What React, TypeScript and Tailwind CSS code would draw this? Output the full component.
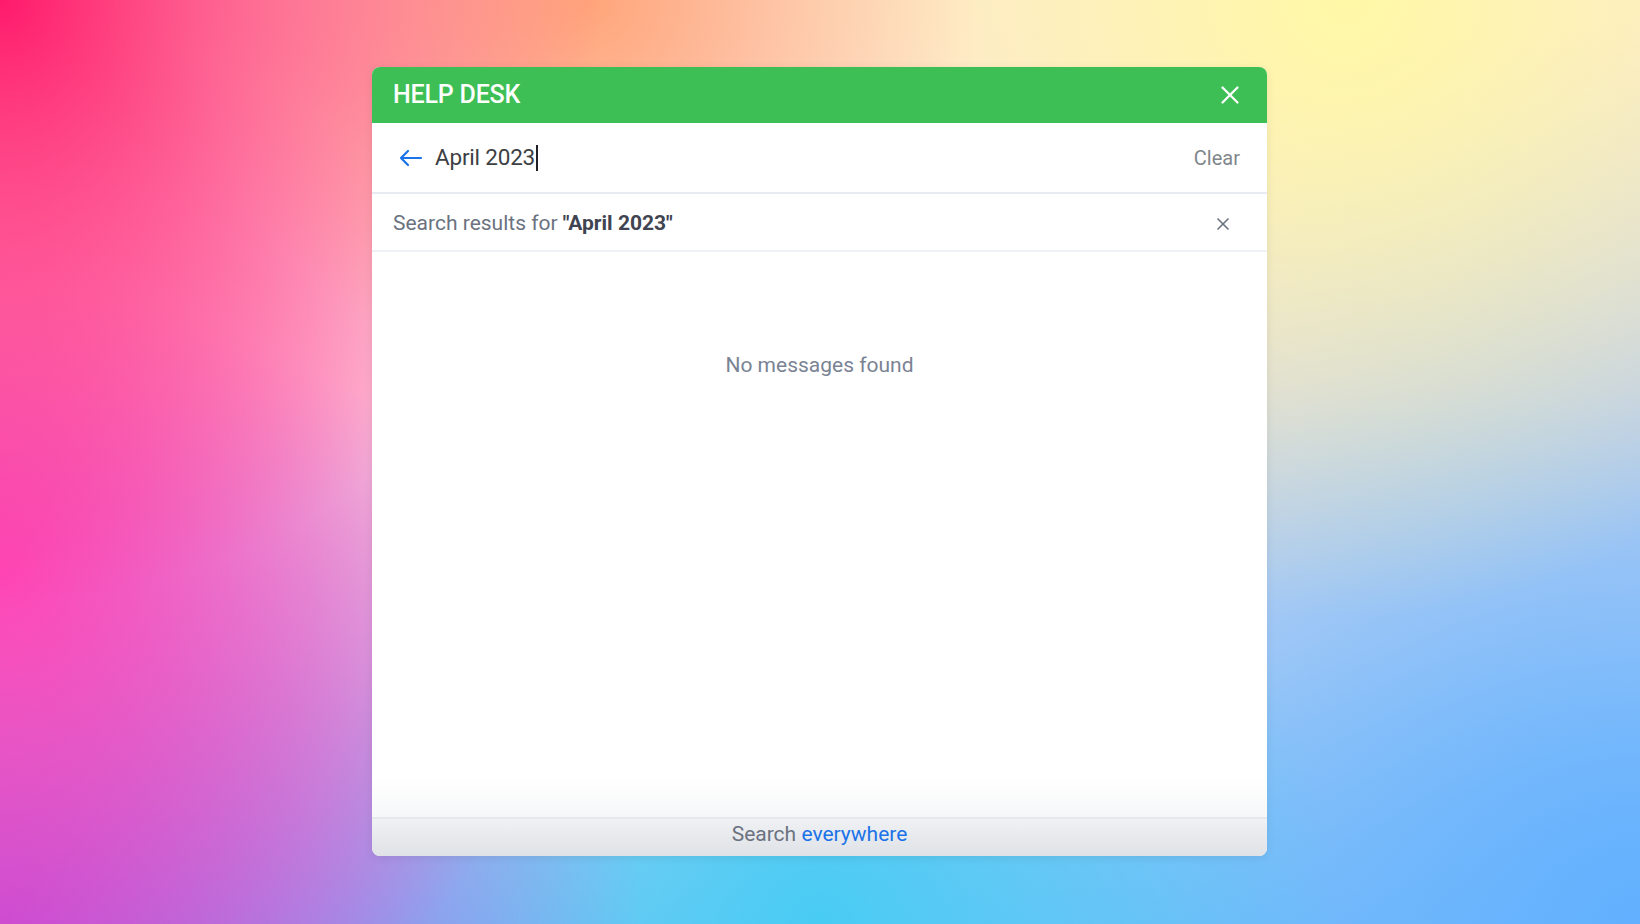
import { X } from 'lucide-react';

export default function App() {
  return (
    <div className="w-[1640px] h-[924px] overflow-hidden flex pl-[372px] pt-[67px] font-['Roboto','Liberation_Sans',sans-serif] bg-[radial-gradient(circle_at_0%_0%,#ff1a6b_0%,rgba(255,26,107,0)_32%),radial-gradient(circle_at_36%_0%,#ffa57a_0%,rgba(255,165,122,0)_28%),radial-gradient(circle_at_82%_0%,#fff8a6_0%,rgba(255,248,166,0)_38%),radial-gradient(circle_at_0%_62%,#ff46b6_0%,rgba(255,70,182,0)_32%),radial-gradient(circle_at_0%_100%,#b24ee0_0%,rgba(178,78,224,0)_34%),radial-gradient(circle_at_50%_100%,#48ccf4_0%,rgba(72,204,244,0)_42%),radial-gradient(circle_at_100%_100%,#62b0ff_0%,rgba(98,176,255,0)_48%),linear-gradient(180deg,#fde6d8_0%,#fde2e0_42%,#d4dcee_70%,#8cc8f4_100%)]">
      <div className="w-[895px] h-[789px] flex flex-col rounded-[8px] overflow-hidden bg-white shadow-[0_2px_10px_rgba(0,0,0,0.08)]">
        {/* Header */}
        <div className="h-[56px] shrink-0 bg-[#3ebf55] flex items-center justify-between pl-[21px] pr-[22px]">
          <span className="text-white text-[25px] font-medium tracking-[-0.2px]">HELP DESK</span>
          <X className="text-white w-[30px] h-[30px]" strokeWidth={1.8} />
        </div>

        {/* Search input */}
        <div className="h-[71px] shrink-0 flex items-center border-b-2 border-[#e8ecf2] pl-[26px] pr-[27px]">
          <svg width="25" height="20" viewBox="0 0 25 20" fill="none" className="shrink-0">
            <path d="M23 10H3M10 3L3 10L10 17" stroke="#1a73e8" strokeWidth="2.2" strokeLinecap="round" strokeLinejoin="round" />
          </svg>
          <div className="ml-[12px] flex items-center flex-1">
            <span className="text-[22.5px] text-[#3c4043] tracking-[-0.2px]">April 2023</span>
            <span className="w-[2px] h-[26px] bg-[#202124] ml-[1px]" />
          </div>
          <span className="text-[20px] text-[#80868b]">Clear</span>
        </div>

        {/* Results label */}
        <div className="h-[58px] shrink-0 flex items-center justify-between border-b-2 border-[#eef1f5] pl-[21px] pr-[34px] pt-[3px]">
          <span className="text-[21px] text-[#6b7280]">
            Search results for <span className="font-bold text-[#3f4450]">"April 2023"</span>
          </span>
          <X className="text-[#6b7280] w-[20px] h-[20px]" strokeWidth={2} />
        </div>

        {/* Body */}
        <div className="flex-1 flex flex-col items-center pt-[98px] bg-[linear-gradient(180deg,#ffffff_0%,#ffffff_93%,#f6f7f8_100%)]">
          <span className="text-[21px] text-[#7a8393]">No messages found</span>
        </div>

        {/* Footer */}
        <div className="h-[39px] shrink-0 flex items-center justify-center pb-[5px] border-t-2 border-[#e6e8ec] bg-[linear-gradient(180deg,#eff1f4,#dfe2e6)]">
          <span className="text-[21px] text-[#6b7280]">
            Search <span className="text-[#1a73e8]">everywhere</span>
          </span>
        </div>
      </div>
    </div>
  );
}
